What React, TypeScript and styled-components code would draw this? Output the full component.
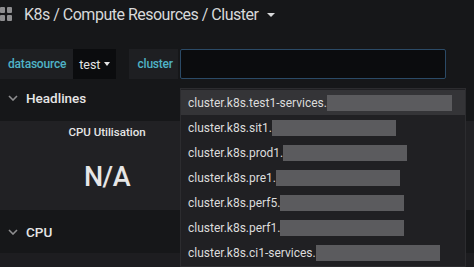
import React from "react";
import styled, { createGlobalStyle } from "styled-components";

const Global = createGlobalStyle`
  html, body { margin: 0; padding: 0; background: #161719; overflow: hidden; }
  body { font-family: Roboto, "Liberation Sans", sans-serif; color: #d8d9da; }
`;

const Page = styled.div`
  position: relative;
  width: 474px;
  height: 267px;
  overflow: hidden;
  background: #161719;
`;

const TopBar = styled.div`
  display: flex;
  align-items: center;
  height: 28px;
`;

const GridIcon = styled.div`
  display: grid;
  grid-template-columns: 5px 5px;
  grid-template-rows: 6px 6px;
  gap: 2px;
  margin-right: 12px;
  span { background: #8e8e90; border-radius: 1px; }
`;

const Title = styled.div`
  font-size: 16px;
  letter-spacing: -0.5px;
  color: #d8d9da;
  display: flex;
  align-items: center;
  gap: 9px;
`;

const Caret = styled.span`
  width: 0;
  height: 0;
  border-left: 4px solid transparent;
  border-right: 4px solid transparent;
  border-top: 4px solid #d8d9da;
  margin-top: 2px;
`;

const VarRow = styled.div`
  display: flex;
  align-items: center;
  margin-top: 21px;
  height: 30px;
`;

const VarGroup = styled.div<{ $gap?: number }>`
  display: flex;
  height: 30px;
  margin-right: ${(p) => p.$gap ?? 0}px;
`;

const VarLabel = styled.div<{ $pr?: number }>`
  display: flex;
  align-items: center;
  padding: 0 ${(p) => p.$pr ?? 7}px 0 8px;
  background: #1e1f22;
  color: #4fb3c7;
  font-size: 12px;
  letter-spacing: -0.2px;
  font-weight: 500;
`;

const VarValue = styled.div`
  display: flex;
  align-items: center;
  gap: 4px;
  padding: 0 6px;
  background: #0b0c0e;
  color: #e4e4e4;
  font-size: 12.5px;
`;

const SmallCaret = styled.span`
  width: 0;
  height: 0;
  border-left: 3px solid transparent;
  border-right: 3px solid transparent;
  border-top: 4px solid #e4e4e4;
`;

const Input = styled.div`
  margin-left: 2px;
  width: 264px;
  height: 28px;
  background: #0b0c0e;
  border: 1px solid #2b4a66;
  border-radius: 2px;
`;

const RowHeader = styled.div<{ $h: number; $pb?: number }>`
  display: flex;
  align-items: center;
  box-sizing: border-box;
  height: ${(p) => p.$h}px;
  padding-left: 8px;
  padding-bottom: ${(p) => p.$pb ?? 0}px;
  gap: 8px;
  font-size: 13.5px;
  font-weight: 500;
  color: #e6e6e6;
  background: #161719;
`;

const Chevron = () => (
  <svg width="10" height="6" viewBox="0 0 10 6">
    <path d="M1 1 L5 5 L9 1" fill="none" stroke="#8e8e90" strokeWidth="1.6" />
  </svg>
);

const PanelRow = styled.div`
  display: flex;
  gap: 4px;
  height: 89px;
`;

const Panel = styled.div<{ $w?: number }>`
  width: ${(p) => (p.$w ? `${p.$w}px` : "auto")};
  flex: ${(p) => (p.$w ? "none" : "1")};
  background: #212124;
  display: flex;
  flex-direction: column;
  align-items: center;
`;

const PanelTitle = styled.div`
  margin-top: 4px;
  font-size: 11.5px;
  font-weight: 500;
  color: #e6e6e6;
`;

const BigValue = styled.div`
  margin-top: 22px;
  font-size: 27px;
  letter-spacing: -0.5px;
  font-weight: 500;
  color: #e6e6e6;
`;

const BottomPanel = styled.div`
  height: 20px;
  background: #1d1d20;
`;

const Dropdown = styled.div`
  position: absolute;
  left: 180px;
  top: 88px;
  width: 284px;
  padding: 1px 0;
  background: #202023;
  border: 1px solid #2c2c2f;
`;

const Item = styled.div<{ $active?: boolean }>`
  display: flex;
  align-items: center;
  height: 25px;
  padding-left: 7px;
  font-size: 12px;
  color: #dcdcdc;
  background: ${(p) => (p.$active ? "#343437" : "transparent")};
`;

const Redact = styled.span<{ $w: number }>`
  display: inline-block;
  width: ${(p) => p.$w}px;
  height: 16px;
  background: #5b5b5e;
`;

const items = [
  { t: "cluster.k8s.test1-services.", w: 125 },
  { t: "cluster.k8s.sit1.", w: 124 },
  { t: "cluster.k8s.prod1.", w: 124 },
  { t: "cluster.k8s.pre1.", w: 124 },
  { t: "cluster.k8s.perf5.", w: 124 },
  { t: "cluster.k8s.perf1.", w: 124 },
  { t: "cluster.k8s.ci1-services.", w: 124 },
];

export default function App() {
  return (
    <Page>
      <Global />
      <TopBar>
        <GridIcon>
          <span />
          <span />
          <span />
          <span />
        </GridIcon>
        <Title>
          K8s / Compute Resources / Cluster <Caret />
        </Title>
      </TopBar>
      <VarRow>
        <VarGroup $gap={13}>
          <VarLabel>datasource</VarLabel>
          <VarValue>
            test <SmallCaret />
          </VarValue>
        </VarGroup>
        <VarGroup>
          <VarLabel $pr={5}>cluster</VarLabel>
          <Input />
        </VarGroup>
      </VarRow>
      <RowHeader $h={42} $pb={4}>
        <Chevron />
        Headlines
      </RowHeader>
      <PanelRow>
        <Panel $w={214}>
          <PanelTitle>CPU Utilisation</PanelTitle>
          <BigValue>N/A</BigValue>
        </Panel>
        <Panel />
      </PanelRow>
      <RowHeader $h={43}>
        <Chevron />
        CPU
      </RowHeader>
      <BottomPanel />
      <Dropdown>
        {items.map((it, i) => (
          <Item key={i} $active={i === 0}>
            {it.t}
            <Redact $w={it.w} />
          </Item>
        ))}
      </Dropdown>
    </Page>
  );
}
